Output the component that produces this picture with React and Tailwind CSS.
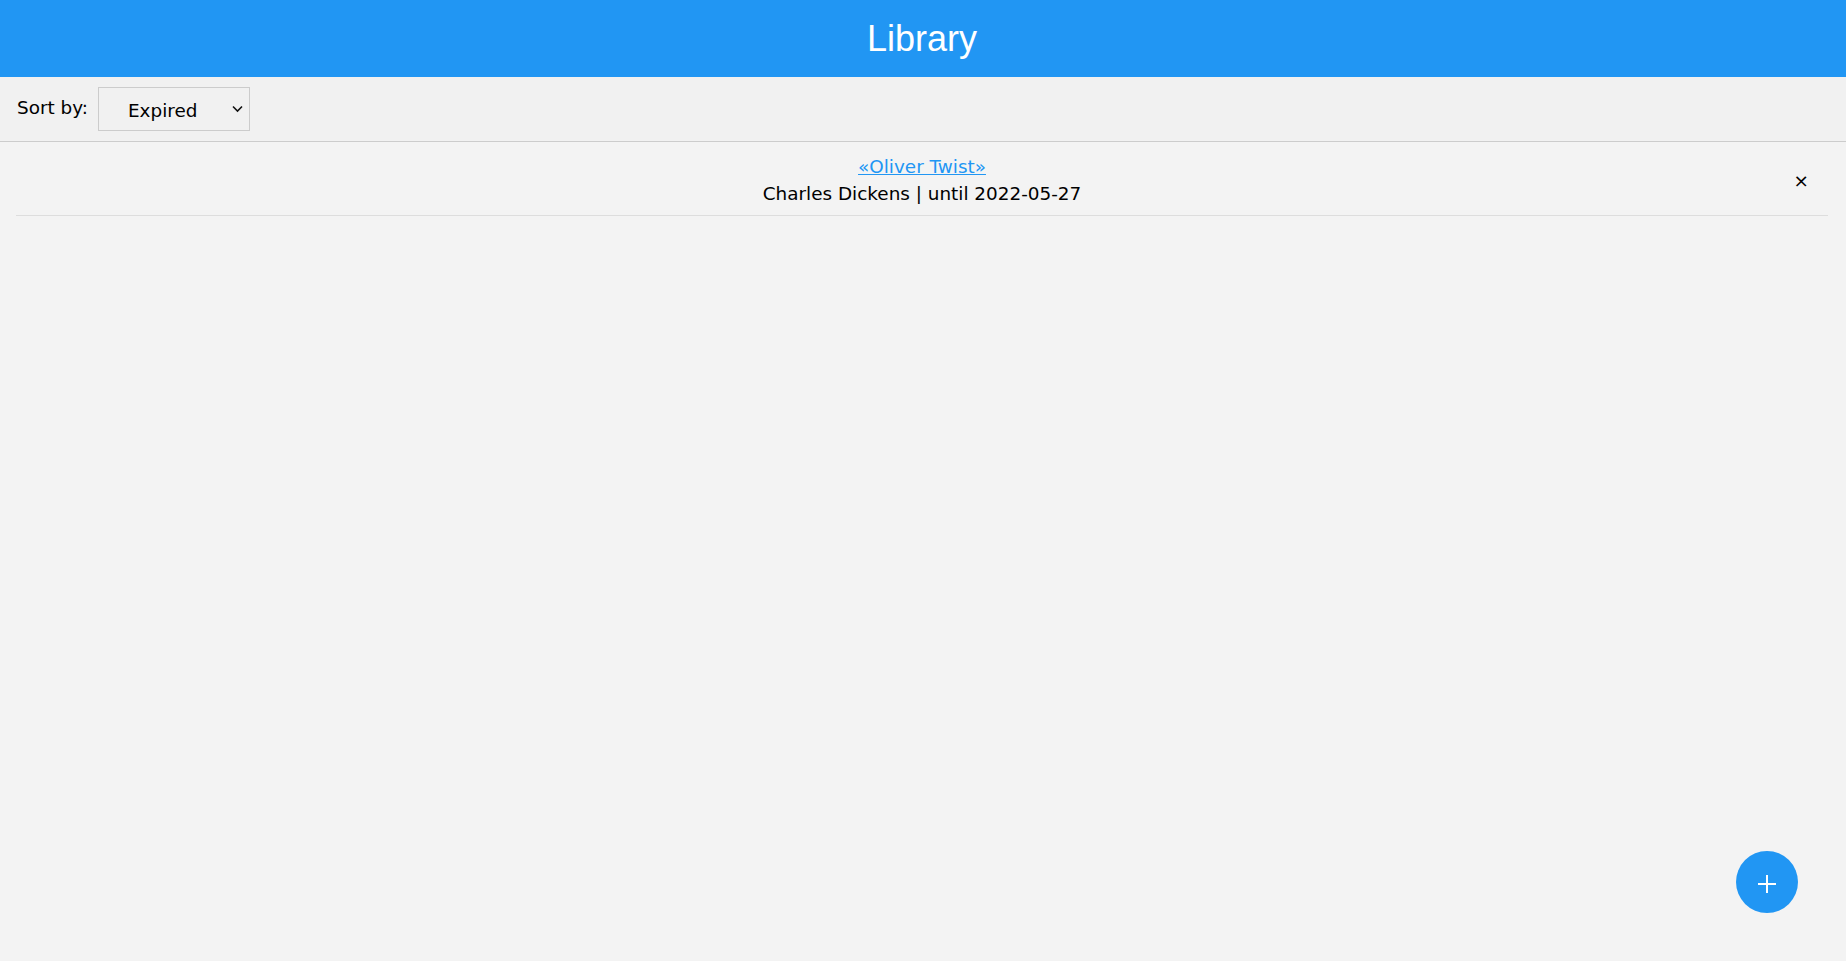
import { useState } from 'react';

const App = () => {
  const [sort, setSort] = useState('expired');

  return (
    <div className="min-h-screen bg-[#f3f3f3] font-['DejaVu_Sans',sans-serif] text-black">
      <header className="h-[77px] bg-[#2196f3] flex items-center justify-center pr-[2px]">
        <h1 className="text-[36px] leading-none text-white font-['Liberation_Sans',sans-serif]">Library</h1>
      </header>

      <div className="h-[65px] bg-[#f1f1f1] border-b border-[#cccccc] flex items-center pl-[17px] gap-[10px]">
        <label htmlFor="sort" className="text-[18.4px] leading-none mb-[1px]">Sort by:</label>
        <div className="relative">
          <select
            id="sort"
            value={sort}
            onChange={(e) => setSort(e.target.value)}
            className="block appearance-none w-[152px] h-[44px] bg-[#f1f1f1] border border-[#cccccc] text-[18.4px] pl-[29px] pr-2 pt-[4px]"
          >
            <option value="expired">Expired</option>
            <option value="title">Title</option>
            <option value="author">Author</option>
          </select>
          <svg
            className="absolute right-[7px] top-[18px] pointer-events-none"
            width="11"
            height="8"
            viewBox="0 0 11 8"
            fill="none"
            stroke="#111111"
            strokeWidth="1.6"
          >
            <path d="M1 1.5l4.5 4.5 4.5-4.5" />
          </svg>
        </div>
      </div>

      <div className="ml-4 mr-[18px] h-[74px] border-b border-[#dddddd] relative flex flex-col items-center justify-center text-[18.4px] leading-[27px] pt-[3px]">
        <a href="#" className="text-[#2196f3] underline">«Oliver Twist»</a>
        <div>Charles Dickens | until 2022-05-27</div>
        <button className="absolute right-[19px] top-[30px] text-[18.4px] leading-none">×</button>
      </div>

      <button className="fixed right-[48px] bottom-[48px] w-[62px] h-[62px] rounded-full bg-[#2196f3] flex items-center justify-center pt-[4px]">
        <svg width="18" height="18" viewBox="0 0 18 18" fill="none" stroke="white" strokeWidth="2">
          <path d="M9 0v18M0 9h18" />
        </svg>
      </button>
    </div>
  );
};

export default App;
